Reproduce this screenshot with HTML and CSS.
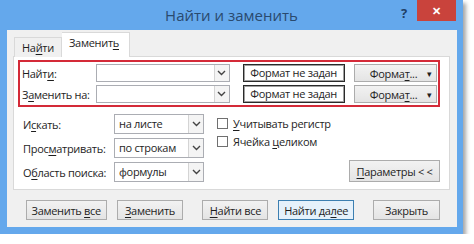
FILE: index.html
```html
<!DOCTYPE html>
<html lang="ru">
<head>
  <meta charset="UTF-8">
  <title>Найти и заменить</title>
  <link rel="stylesheet" href="styles.css">
</head>
<body>
  <div class="window">
    <div class="titlebar">
      <span></span>
      <span class="title">Найти и заменить</span>
      <div class="controls">
        <span class="help">?</span>
        <span class="close">&#x2715;</span>
      </div>
    </div>

    <div class="client">
      <div class="tabs">
        <span class="tab">На<u>й</u>ти</span>
        <span class="tab active">Заменит<u>ь</u></span>
      </div>

      <div class="panel">
        <div class="find-box">
          <div class="find-row">
            <span class="label">Найт<u>и</u>:</span>
            <div class="combo wide"><span class="combo-text"></span><span class="drop"><svg width="9" height="6" viewBox="0 0 9 6"><path d="M1 1l3.5 3.5L8 1" fill="none" stroke="#444" stroke-width="1.4"/></svg></span></div>
            <div class="fmt-box">Формат не задан</div>
            <div class="btn fmt-btn"><span>Форма<u>т</u>...</span><span class="tri">&#x25BE;</span></div>
          </div>
          <div class="find-row">
            <span class="label">З<u>а</u>менить на:</span>
            <div class="combo wide"><span class="combo-text"></span><span class="drop"><svg width="9" height="6" viewBox="0 0 9 6"><path d="M1 1l3.5 3.5L8 1" fill="none" stroke="#444" stroke-width="1.4"/></svg></span></div>
            <div class="fmt-box">Формат не задан</div>
            <div class="btn fmt-btn"><span>Форма<u>т</u>...</span><span class="tri">&#x25BE;</span></div>
          </div>
        </div>

        <div class="options">
          <div class="opt-grid">
            <span class="label">И<u>с</u>кать:</span>
            <div class="combo"><span class="combo-text">на листе</span><span class="drop"><svg width="9" height="6" viewBox="0 0 9 6"><path d="M1 1l3.5 3.5L8 1" fill="none" stroke="#444" stroke-width="1.4"/></svg></span></div>
            <span class="label">Прос<u>м</u>атривать:</span>
            <div class="combo"><span class="combo-text">по строкам</span><span class="drop"><svg width="9" height="6" viewBox="0 0 9 6"><path d="M1 1l3.5 3.5L8 1" fill="none" stroke="#444" stroke-width="1.4"/></svg></span></div>
            <span class="label">О<u>б</u>ласть поиска:</span>
            <div class="combo"><span class="combo-text">формулы</span><span class="drop"><svg width="9" height="6" viewBox="0 0 9 6"><path d="M1 1l3.5 3.5L8 1" fill="none" stroke="#444" stroke-width="1.4"/></svg></span></div>
          </div>
          <div class="check-col">
            <label class="check"><span class="box"></span><span><u>У</u>читывать регистр</span></label>
            <label class="check"><span class="box"></span><span>Ячейка <u>ц</u>еликом</span></label>
            <div class="btn params-btn"><span><u>П</u>араметры &lt; &lt;</span></div>
          </div>
        </div>
      </div>

      <div class="actions">
        <div class="btn b-replace-all"><span>Заменить <u>в</u>се</span></div>
        <div class="btn b-replace"><span><u>З</u>аменить</span></div>
        <div class="btn b-find-all"><span><u>Н</u>айти все</span></div>
        <div class="btn b-find-next default"><span>Найти да<u>л</u>ее</span></div>
        <div class="btn b-close"><span>Закрыть</span></div>
      </div>
    </div>
  </div>
</body>
</html>
```

FILE: styles.css
```css
body {
  margin: 0;
  background: #fff;
  font-family: "Open Sans", "Noto Sans", sans-serif;
  font-size: 11px;
  letter-spacing: -0.3px;
  color: #1e1e1e;
  white-space: nowrap;
}
u {
  text-decoration-thickness: 1px;
  text-underline-offset: 2px;
}
.window {
  width: 463px;
  height: 234px;
  box-sizing: border-box;
  padding: 0 6px 7px 7px;
  background: #64a8ec;
  box-shadow: 3px 3px 4px rgba(0, 0, 0, 0.35);
}
.titlebar {
  height: 30px;
  margin: 0 -6px 0 -7px;
  display: grid;
  grid-template-columns: 1fr auto 1fr;
}
.title {
  align-self: center;
  font-size: 15px;
  letter-spacing: 0;
  color: #2a4a6e;
}
.controls {
  justify-self: end;
  display: flex;
  align-items: flex-start;
  padding-right: 7px;
}
.help {
  width: 26px;
  text-align: center;
  font-weight: bold;
  font-size: 13px;
  color: #1f3f66;
  margin-top: 4px;
}
.close {
  width: 39px;
  height: 21px;
  background: #c9433c;
  color: #fff;
  font-size: 11px;
  font-weight: bold;
  display: flex;
  align-items: center;
  justify-content: center;
}
.client {
  height: 197px;
  background: #f0f0f0;
  padding: 3px 7px 0 6px;
  box-sizing: border-box;
}
.tabs {
  display: flex;
  align-items: flex-end;
  height: 24px;
  padding-left: 1px;
  position: relative;
  z-index: 1;
}
.tab {
  height: 20px;
  box-sizing: border-box;
  width: 48px;
  border: 1px solid #d9d9d9;
  border-bottom: none;
  background: #f0f0f0;
  padding: 2px 0 0 7px;
}
.tab.active {
  height: 25px;
  width: 68px;
  background: #fff;
  border-left: none;
  padding: 2px 0 0 7px;
}
.panel {
  margin-top: -1px;
  height: 134px;
  box-sizing: border-box;
  background: #fff;
  border: 1px solid #d9d9d9;
  padding: 3px 9px 0 4px;
}
.find-box {
  border: 2px solid #d42a38;
  padding: 2px 1px 2px 2px;
  display: flex;
  flex-direction: column;
  gap: 3px;
}
.find-row {
  display: flex;
  align-items: center;
  height: 18px;
}
.find-row .label {
  width: 76px;
}
.combo {
  display: flex;
  width: 90px;
  height: 20px;
  box-sizing: border-box;
  border: 1px solid #abadb3;
  background: #fff;
}
.combo.wide {
  width: 136px;
  height: 18px;
  margin-right: 13px;
}
.combo-text {
  flex: 1;
  padding-left: 4px;
  line-height: 18px;
}
.drop {
  width: 14px;
  border-left: 1px solid #d4d4d4;
  background: #f4f4f4;
  display: flex;
  align-items: center;
  justify-content: center;
}
.fmt-box {
  width: 104px;
  height: 18px;
  box-sizing: border-box;
  border: 1px solid #2a2a2a;
  box-shadow: inset 0 0 0 1px #a0a0a0;
  text-align: center;
  line-height: 16px;
  margin-right: 9px;
}
.btn {
  box-sizing: border-box;
  height: 20px;
  border: 1px solid #acacac;
  background: linear-gradient(#f2f2f2, #e4e4e4);
  display: flex;
  align-items: center;
  justify-content: center;
}
.fmt-btn {
  width: 85px;
  height: 18px;
  justify-content: flex-end;
  padding-right: 4px;
}
.tri {
  font-size: 9px;
  margin-left: 10px;
}
.options {
  margin-top: 7px;
  display: flex;
  padding-left: 5px;
}
.opt-grid {
  display: grid;
  grid-template-columns: 91px 90px;
  row-gap: 4px;
  align-items: center;
}
.check-col {
  margin-left: 13px;
  flex: 1;
  display: flex;
  flex-direction: column;
}
.check {
  display: flex;
  align-items: center;
  height: 18px;
  gap: 5px;
}
.box {
  width: 11px;
  height: 11px;
  box-sizing: border-box;
  border: 1px solid #707070;
  background: #fff;
}
.params-btn {
  margin-top: auto;
  align-self: flex-end;
  width: 91px;
  height: 22px;
}
.actions {
  display: flex;
  margin-top: 10px;
  padding-left: 13px;
}
.actions .btn {
  margin-right: 10px;
}
.b-replace-all { width: 83px; }
.b-replace { width: 69px; margin-right: 19px !important; }
.b-find-all { width: 68px; }
.b-find-next { width: 78px; margin-right: 19px !important; }
.b-close { width: 69px; }
.btn.default {
  border-color: #3c7fb1;
  background: #e5f1fb;
}
```
